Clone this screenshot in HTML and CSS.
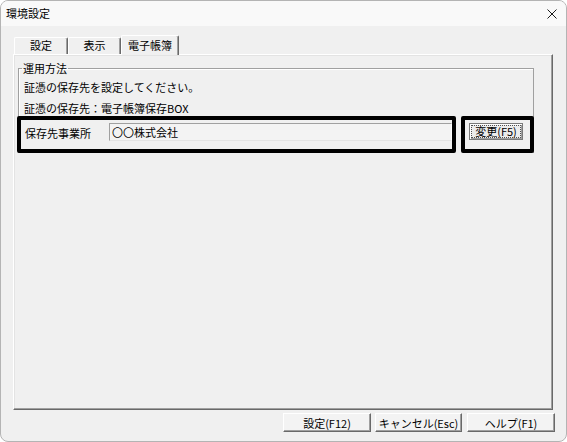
FILE: index.html
```html
<!DOCTYPE html>
<html lang="ja">
<head>
<meta charset="utf-8">
<title>環境設定</title>
<link rel="stylesheet" href="styles.css">
</head>
<body>
<div class="window">
  <div class="titlebar">
    <span class="title">環境設定</span>
    <svg class="close" width="10" height="10" viewBox="0 0 10 10" aria-hidden="true">
      <path d="M0.5 0.5 L9.5 9.5 M9.5 0.5 L0.5 9.5" stroke="#1a1a1a" stroke-width="1" fill="none"/>
    </svg>
  </div>
  <div class="content">
    <div class="tabs">
      <div class="tab tab-1">設定</div>
      <div class="tab tab-2">表示</div>
      <div class="tab tab-active">電子帳簿</div>
    </div>
    <div class="panel">
      <fieldset class="group">
        <legend class="legend">運用方法</legend>
        <p class="line line-1">証憑の保存先を設定してください。</p>
        <p class="line line-2">証憑の保存先：電子帳簿保存BOX</p>
        <div class="row">
          <div class="mark mark-field">
            <span class="label">保存先事業所</span>
            <div class="textbox">〇〇株式会社</div>
          </div>
          <div class="mark mark-btn">
            <button class="btn btn-change"><span class="focus">変更(F5)</span></button>
          </div>
        </div>
      </fieldset>
    </div>
    <div class="footer">
      <button class="btn btn-foot btn-ok">設定(F12)</button>
      <button class="btn btn-foot btn-cancel">キャンセル(Esc)</button>
      <button class="btn btn-foot btn-help">ヘルプ(F1)</button>
    </div>
  </div>
</div>
</body>
</html>
```
FILE: styles.css
```css
* { box-sizing: border-box; }

html, body {
  margin: 0;
  padding: 0;
  background: #ffffff;
}

body {
  font-family: "Noto Sans CJK JP", "MS UI Gothic", sans-serif;
  font-size: 11px;
  color: #000;
}

.window {
  width: 567px;
  height: 442px;
  border: 1px solid #b4b4b4;
  border-radius: 8px;
  background: #f0f0f0;
  overflow: hidden;
}

.titlebar {
  height: 25px;
  background: #f9f9f9;
  display: flex;
  align-items: center;
  justify-content: space-between;
  padding: 0 9px 0 5px;
}

.title {
  font-size: 11px;
  line-height: 14px;
  margin-top: -1px;
}

.close {
  display: block;
  margin-top: 0;
}

.content {
  padding: 9px 13px 0 12px;
}

.tabs {
  display: flex;
  align-items: flex-end;
  height: 19px;
  padding-left: 1px;
}

.tab {
  height: 17px;
  border-top: 1px solid #ffffff;
  border-left: 1px solid #ffffff;
  border-right: 1px solid #696969;
  box-shadow: inset -1px 0 #a0a0a0;
  border-radius: 2px 2px 0 0;
  text-align: center;
  line-height: 15px;
  background: #f0f0f0;
}

.tab-1 { width: 54px; }
.tab-2 { width: 53px; }

.tab-active {
  width: 58px;
  height: 20px;
  margin-bottom: -1px;
  position: relative;
  z-index: 1;
  line-height: 18px;
}

.panel {
  height: 356px;
  border-top: 1px solid #ffffff;
  border-left: 1px solid #ffffff;
  border-right: 1px solid #696969;
  border-bottom: 1px solid #696969;
  box-shadow: inset -1px -1px #a0a0a0, inset 1px 1px #e3e3e3;
  padding: 5px 18px 0 4px;
}

.group {
  margin: 0;
  padding: 0 0 0 0;
  width: 516px;
  border: 1px solid #a0a0a0;
  border-bottom: none;
  box-shadow: inset 1px 1px #ffffff;
  min-width: 0;
}

.legend {
  margin-left: 3px;
  padding: 0 1px;
  line-height: 16px;
  height: 16px;
}

.line {
  margin: 0;
  padding-left: 5px;
  line-height: 16px;
}

.line-1 { margin-top: 3px; }
.line-2 { margin-top: 5px; }

.row {
  display: flex;
  margin-left: -2px;
  margin-right: -2px;
}

.mark {
  border: 4px solid #000;
  border-radius: 2px;
  height: 37px;
}

.mark-field {
  width: 439px;
  display: flex;
  align-items: flex-start;
  padding-left: 4px;
}

.label {
  width: 84px;
  line-height: 16px;
  margin-top: 5px;
}

.textbox {
  flex: 1;
  height: 18px;
  margin-top: 3px;
  border-top: 1px solid #a0a0a0;
  border-left: 1px solid #a0a0a0;
  border-right: 1px solid #ffffff;
  border-bottom: 1px solid #e3e3e3;
  background: #f3f3f3;
  padding-left: 2px;
  line-height: 16px;
  white-space: nowrap;
}

.mark-btn {
  width: 73px;
  margin-left: 5px;
  padding: 3px 0 0 4px;
}

.btn {
  font-family: inherit;
  font-size: 11px;
  color: #000;
  margin: 0;
  background: #f0f0f0;
  border-top: 1px solid #ffffff;
  border-left: 1px solid #ffffff;
  border-right: 1px solid #696969;
  border-bottom: 1px solid #696969;
  box-shadow: inset -1px -1px #a0a0a0;
  border-radius: 0;
  padding: 0;
  line-height: 15px;
  display: block;
}

.btn-change {
  width: 54px;
  height: 17px;
  border: 1px solid #7a7a7a;
  box-shadow: inset 1px 1px #ffffff, inset -1px -1px #a0a0a0;
  padding: 2px;
  background: #ececec;
}

.focus {
  display: block;
  height: 11px;
  line-height: 10px;
  outline: 1px dotted #505050;
  outline-offset: 0;
  text-align: center;
}

.footer {
  display: flex;
  justify-content: flex-end;
  margin-top: 3px;
  margin-right: -2px;
}

.btn-foot {
  height: 19px;
  line-height: 16px;
  text-align: center;
  background: #f3f3f3;
}

.btn-ok { width: 88px; }
.btn-cancel { width: 87px; margin-left: 4px; }
.btn-help { width: 88px; margin-left: 5px; }
```
